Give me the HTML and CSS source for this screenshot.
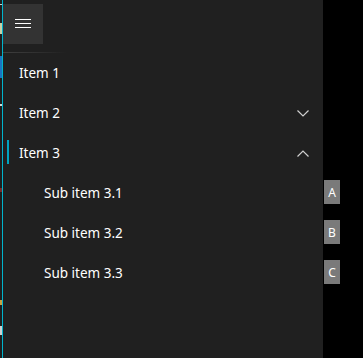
FILE: index.html
```html
<!DOCTYPE html>
<html>
<head>
<meta charset="utf-8">
<link rel="stylesheet" href="styles.css">
</head>
<body>
<div class="edge"></div>
<div class="accent"></div>
<nav class="pane">
  <button class="toggle" aria-label="Menu">
    <svg width="16" height="10" viewBox="0 0 16 10"><path d="M0 0.5H16M0 4.5H16M0 8.5H16" stroke="#fff" stroke-width="1"/></svg>
  </button>
  <div class="sep"></div>
  <ul class="menu">
    <li class="row"><span>Item 1</span></li>
    <li class="row"><span>Item 2</span>
      <svg class="chev" width="12" height="7" viewBox="0 0 12 7"><path d="M0.5 0.5L6 6L11.5 0.5" fill="none" stroke="#d0d0d0" stroke-width="1.2"/></svg>
    </li>
    <li class="row selected"><i class="indicator"></i><span>Item 3</span>
      <svg class="chev" width="12" height="7" viewBox="0 0 12 7"><path d="M0.5 6.5L6 1L11.5 6.5" fill="none" stroke="#d0d0d0" stroke-width="1.2"/></svg>
    </li>
    <li class="row sub"><span>Sub item 3.1</span></li>
    <li class="row sub"><span>Sub item 3.2</span></li>
    <li class="row sub"><span>Sub item 3.3</span></li>
  </ul>
</nav>
<div class="side">
  <span class="badge">A</span>
  <span class="badge">B</span>
  <span class="badge">C</span>
</div>
</body>
</html>
```

FILE: styles.css
```css
html, body {
  margin: 0;
  padding: 0;
  height: 100%;
}
body {
  background: #000;
  display: flex;
  font-family: "Noto Sans", "Open Sans", sans-serif;
  color: #fff;
  overflow: hidden;
}
.edge {
  width: 2px;
  flex: none;
  background: linear-gradient(to bottom,
    #1e1e1e 0, #1e1e1e 4px, #cfcfcf 4px, #cfcfcf 5px, #1e1e1e 5px,
    #1e1e1e 23px, #c8d0a8 23px, #c8d0a8 34px, #1e1e1e 34px,
    #1e1e1e 56px, #1a74c0 56px, #1a74c0 78px, #1e1e1e 78px,
    #1e1e1e 104px, #d8d8d8 104px, #d8d8d8 106px, #1e1e1e 106px,
    #1e1e1e 188px, #7a2a2a 188px, #7a2a2a 192px, #1e1e1e 192px,
    #1e1e1e 300px, #c9a040 300px, #c9a040 305px, #1e1e1e 305px,
    #1e1e1e 326px, #d0d0d0 326px, #d0d0d0 335px, #1e1e1e 335px);
}
.accent {
  width: 1px;
  flex: none;
  background: #00b4cc;
}
.pane {
  width: 320px;
  flex: none;
  background: #202020;
  display: flex;
  flex-direction: column;
}
.toggle {
  margin: 4px 0 0 0;
  width: 40px;
  height: 40px;
  border: 0;
  padding: 0;
  background: #333333;
  display: flex;
  align-items: center;
  justify-content: center;
}
.sep {
  margin-top: 8px;
  height: 1px;
  width: 64px;
  background: linear-gradient(to right, #3e3e3e, #2e2e2e 60%, #202020);
}
.menu {
  list-style: none;
  margin: 0;
  padding: 0;
}
.row {
  position: relative;
  height: 40px;
  box-sizing: border-box;
  display: flex;
  align-items: center;
  padding: 0 14px 1px 16px;
  font-size: 13.5px;
}
.row span {
  flex: 1;
}
.row.sub {
  padding-left: 41px;
}
.chev {
  flex: none;
  margin-top: 1px;
}
.indicator {
  position: absolute;
  left: 4px;
  top: 7px;
  width: 2px;
  height: 24px;
  background: #00a4c0;
}
.side {
  display: flex;
  flex-direction: column;
  gap: 16px;
  padding-top: 180px;
  padding-left: 1px;
}
.badge {
  width: 16px;
  height: 24px;
  background: #7a7a7a;
  color: #fff;
  font-size: 12px;
  display: flex;
  align-items: center;
  justify-content: center;
}
```
